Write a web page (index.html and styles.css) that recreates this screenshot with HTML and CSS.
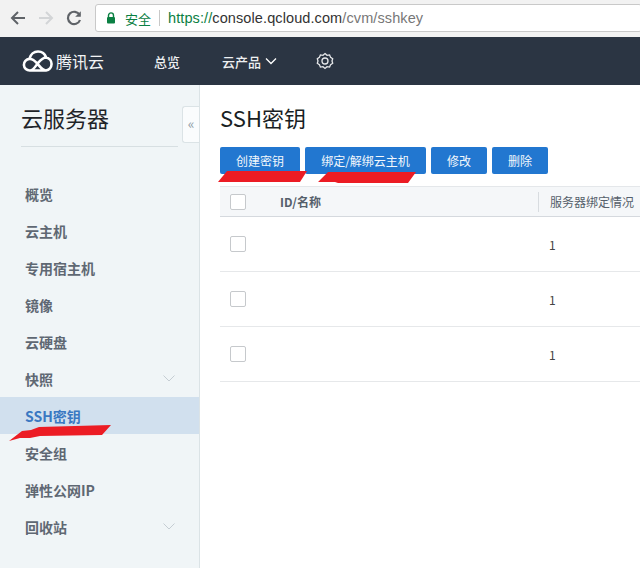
FILE: index.html
```html
<!DOCTYPE html>
<html lang="zh">
<head>
<meta charset="utf-8">
<title>SSH密钥</title>
<link rel="stylesheet" href="styles.css">
</head>
<body>
<div class="page">
  <header class="browser">
    <svg class="tool" width="18" height="18" viewBox="0 0 18 18"><path d="M16 9H3M9 3 3 9l6 6" fill="none" stroke="#5f6368" stroke-width="2"/></svg>
    <svg class="tool" width="18" height="18" viewBox="0 0 18 18"><path d="M2 9h13M9 3l6 6-6 6" fill="none" stroke="#d3d5d7" stroke-width="2"/></svg>
    <svg class="tool" width="18" height="18" viewBox="0 0 18 18"><path d="M14.6 6A6.2 6.2 0 1 0 15 11" fill="none" stroke="#5f6368" stroke-width="2.2"/><path d="M15.8 2.2v5.6h-5.6z" fill="#5f6368"/></svg>
    <div class="omnibox">
      <svg class="lock" width="10" height="12" viewBox="0 0 10 12"><path d="M2.5 5V3.4a2.5 2.5 0 0 1 5 0V5" fill="none" stroke="#0b8043" stroke-width="1.4"/><rect x="1" y="5" width="8" height="6.5" rx="1" fill="#0b8043"/></svg>
      <span class="secure">安全</span>
      <span class="omni-sep"></span>
      <span class="url"><span class="scheme">https://</span>console.qcloud.com<span class="path">/cvm/sshkey</span></span>
    </div>
  </header>

  <nav class="topnav">
    <div class="brand">
      <svg width="32" height="24" viewBox="0 0 32 24"><path d="M8 21.5a5.8 5.8 0 0 1-.6-11.6C8.500 5.500 12 2.500 16 2.500c3.800 0 7 2.500 8.200 6A6.600 6.600 0 0 1 24 21.500H8zM8 10c3.500 0 5.500 2.500 8 5.300 2.400 2.800 4.200 6.200 8 6.200M24.200 8.500c-3.500 0-5.700 2.600-8.200 5.500-2.400 2.900-4.400 7.500-8 7.500" fill="none" stroke="#fff" stroke-width="2.600"/></svg>
      <span class="brand-name">腾讯云</span>
    </div>
    <span class="nav-item nav-first">总览</span>
    <span class="nav-item nav-products">云产品
      <svg width="12" height="8" viewBox="0 0 12 8"><path d="M1 1.500 6 6.500l5-5" fill="none" stroke="#fff" stroke-width="1.300"/></svg>
    </span>
    <svg class="gear" width="18" height="18" viewBox="0 0 18 18"><path d="M9 1.500 11 3.300l2.600-.4 1 2.500 2.100 1.300L16 9l.7 2.300-2.100 1.300-1 2.500-2.600-.4L9 16.500l-2-1.800-2.600.4-1-2.500-2.100-1.300L2 9l-.7-2.300 2.100-1.300 1-2.500 2.600.4z" fill="none" stroke="#e6e8ea" stroke-width="1.300"/><circle cx="9" cy="9" r="3" fill="none" stroke="#e6e8ea" stroke-width="1.300"/></svg>
  </nav>

  <div class="workspace">
    <aside class="sidebar">
      <h2 class="side-title">云服务器</h2>
      <ul class="menu">
        <li class="menu-item">概览</li>
        <li class="menu-item">云主机</li>
        <li class="menu-item">专用宿主机</li>
        <li class="menu-item">镜像</li>
        <li class="menu-item">云硬盘</li>
        <li class="menu-item">快照<svg class="chev" width="12" height="7" viewBox="0 0 12 7"><path d="M.5.500 6 6l5.500-5.500" fill="none" stroke="#c5cdd3"/></svg></li>
        <li class="menu-item active">SSH密钥</li>
        <li class="menu-item">安全组</li>
        <li class="menu-item">弹性公网IP</li>
        <li class="menu-item">回收站<svg class="chev" width="12" height="7" viewBox="0 0 12 7"><path d="M.5.500 6 6l5.500-5.500" fill="none" stroke="#c5cdd3"/></svg></li>
      </ul>
      <div class="collapse">«</div>
    </aside>

    <main class="content">
      <h1 class="page-title">SSH密钥</h1>
      <div class="actions">
        <button class="btn btn-create">创建密钥</button>
        <button class="btn btn-bind">绑定/解绑云主机</button>
        <button class="btn btn-small">修改</button>
        <button class="btn btn-small">删除</button>
      </div>
      <div class="table">
        <div class="row head">
          <span class="cell-check"><span class="check"></span></span>
          <span class="cell-name">ID/名称</span>
          <span class="cell-bind">服务器绑定情况</span>
        </div>
        <div class="row">
          <span class="cell-check"><span class="check"></span></span>
          <span class="cell-name"></span>
          <span class="cell-bind">1</span>
        </div>
        <div class="row">
          <span class="cell-check"><span class="check"></span></span>
          <span class="cell-name"></span>
          <span class="cell-bind">1</span>
        </div>
        <div class="row">
          <span class="cell-check"><span class="check"></span></span>
          <span class="cell-name"></span>
          <span class="cell-bind">1</span>
        </div>
      </div>
    </main>
  </div>

  <svg class="marks" width="640" height="568" viewBox="0 0 640 568">
    <path d="M227 171h80l-7 11h-82z" fill="#ec1c24"/>
    <path d="M328 172h88l-8 11h-70l-3-1h-17z" fill="#ec1c24"/>
    <path d="M22 431l10-5h100-20l-9 0 8-1-8 0" fill="none"/>
    <path d="M9 441l13-10 9-1 8-3 72-2-9 10-62 1-10 2-10 0z" fill="#ec1c24"/>
  </svg>
</div>
</body>
</html>
```

FILE: styles.css
```css
* { box-sizing: border-box; }
html, body { margin: 0; padding: 0; background: #fff; }
body { font-family: "Noto Sans CJK SC", "Liberation Sans", sans-serif; overflow: hidden; }
.page { position: relative; width: 640px; height: 568px; overflow: hidden; display: flex; flex-direction: column; }

.browser { height: 37px; background: #f2f2f2; display: flex; align-items: center; padding: 0 0 1px 9px; gap: 10px; flex: none; }
.tool { flex: none; }
.omnibox { flex: 1; height: 28px; margin: 0 -2px 0 2px; background: #fff; border: 1px solid #c9c9c9; border-radius: 3px; display: flex; align-items: center; padding-left: 10px; }
.lock { flex: none; margin-right: 7px; }
.secure { font-size: 13px; color: #0b8043; margin-left: 2px; }
.omni-sep { width: 1px; height: 16px; background: #c8c8c8; margin: 0 8px 0 8px; }
.url { font-family: "Liberation Sans", sans-serif; font-size: 14.500px; color: #333; white-space: nowrap; letter-spacing: .1px; }
.scheme { color: #0b8043; }
.path { color: #777; }

.topnav { height: 48px; background: #2b3543; display: flex; align-items: center; color: #fff; flex: none; }
.brand { display: flex; align-items: center; margin-left: 22px; width: 132px; gap: 2px; }
.brand-name { font-size: 16px; color: #f2f4f5; }
.nav-item { font-size: 13px; color: #eef0f2; font-weight: 500; }
.nav-first { width: 68px; }
.nav-products { width: 94px; display: flex; align-items: center; gap: 4px; }
.gear { flex: none; }

.workspace { flex: 1; display: flex; min-height: 0; }
.sidebar { position: relative; width: 200px; flex: none; background: #f0f5f7; border-right: 1px solid #dbe3e6; }
.side-title { margin: 15px 21px 0; padding-bottom: 13px; height: 47px; font-size: 22px; line-height: 34px; font-weight: 400; color: #1f2429; border-bottom: 1px solid #d7dfe2; }
.menu { list-style: none; margin: 28px 0 0; padding: 0; }
.menu-item { height: 37px; padding: 0 24px 0 25px; display: flex; align-items: center; justify-content: space-between; font-family: "DejaVu Serif", "Noto Sans CJK SC", serif; font-size: 14px; font-weight: 700; color: #5f6873; }
.menu-item { font-family: "Noto Sans CJK SC", sans-serif; }
.active { background: #d1e0ee; color: #3a78c2; }
.chev { flex: none; }
.collapse { position: absolute; top: 21px; right: 0; width: 17px; height: 37px; background: #fafcfd; border: 1px solid #dbe3e6; border-right: 0; border-radius: 3px 0 0 3px; color: #8d9aa5; font-size: 14px; line-height: 33px; text-align: center; }

.content { flex: 1; min-width: 0; padding: 15px 0 0 20px; }
.page-title { margin: 0; font-size: 22px; line-height: 34px; font-weight: 400; color: #1a1f24; }
.actions { display: flex; gap: 5px; margin-top: 13px; }
.btn { height: 27px; border: 0; border-radius: 2px; background: #2277d0; color: #f2f7fc; font-family: inherit; font-size: 12px; padding: 0; flex: none; }
.btn-create { width: 80px; }
.btn-bind { width: 121px; }
.btn-small { width: 56px; }
.table { margin-top: 12px; width: 420px; border-top: 1px solid #e4e7ea; }
.row { height: 55px; display: flex; align-items: center; border-bottom: 1px solid #e6e8ea; font-size: 12px; color: #444; }
.head { height: 30px; background: #f5f7f9; border-bottom-color: #d5d9de; color: #555f6b; }
.cell-check { width: 60px; padding-left: 10px; flex: none; display: flex; }
.check { width: 16px; height: 16px; border: 1px solid #c6c9cc; border-radius: 2px; background: #fff; }
.cell-name { width: 258px; flex: none; font-weight: 700; }
.cell-bind { padding-left: 11px; white-space: nowrap; }
.head .cell-bind { border-left: 1px solid #d8dce0; height: 20px; line-height: 20px; }
.marks { position: absolute; left: 0; top: 0; pointer-events: none; }
```
